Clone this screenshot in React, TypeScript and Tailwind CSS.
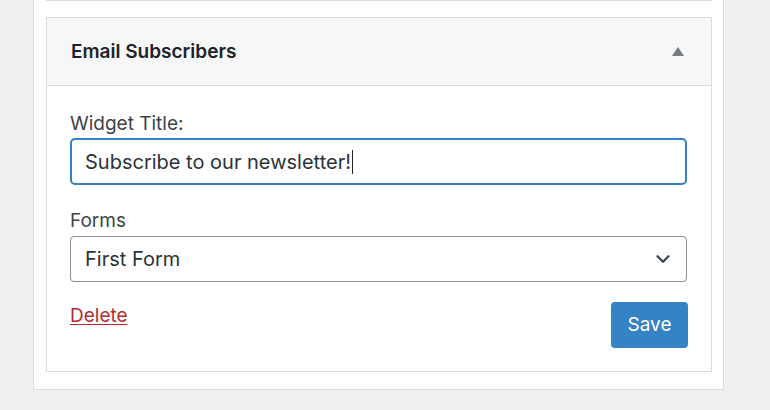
import { ChevronDown } from "lucide-react"

function WidgetHeader() {
    return (
        <div className="flex h-[68px] items-center justify-between border-b border-[#dcdcde] bg-[#f6f7f7] pl-[24px] pr-[27px]">
            <h3 className="pt-px text-[19px] font-semibold text-[#1d2327]">Email Subscribers</h3>
            <span className="h-0 w-0 border-x-[6px] border-b-[9px] border-x-transparent border-b-[#787c82]" />
        </div>
    )
}

export default function App() {
    return (
        <div className="h-[410px] w-[770px] overflow-hidden bg-[#f0f0f1] pl-[33px] font-['Inter',sans-serif]">
            <div className="h-[390px] w-[691px] border-x border-b border-[#dcdcde] bg-white px-[12px]">
                <div className="h-px w-[666px] bg-[#dcdcde]" />
                <div className="mt-[16px] w-[666px] border border-[#dcdcde]">
                    <WidgetHeader />
                    <div className="px-[23px] pb-[23px] pt-[26px]">
                        <label className="block text-[19px] leading-[24px] text-[#3c434a]">Widget Title:</label>
                        <div className="mt-[2px] flex h-[47px] w-[617px] items-center rounded-[5px] border-2 border-[#3582c4] px-[13px] text-[20px] text-[#2c3338]">
                            Subscribe to our newsletter!
                            <span className="ml-px h-[24px] w-px bg-[#1d2327]" />
                        </div>
                        <label className="mt-[24px] block text-[19px] leading-[24px] text-[#3c434a]">Forms</label>
                        <div className="mt-[3px] flex h-[46px] w-[617px] items-center justify-between rounded-[4px] border border-[#8c8f94] pl-[14px] pr-[12px] text-[20px] text-[#2c3338]">
                            <span>First Form</span>
                            <ChevronDown size={22} strokeWidth={2.5} className="text-[#3c434a]" />
                        </div>
                        <div className="mt-[20px] flex items-start justify-between">
                            <a href="#" className="mt-[2px] text-[19px] leading-[24px] text-[#b32d2e] underline underline-offset-2">Delete</a>
                            <button className="h-[46px] w-[77px] rounded-[4px] bg-[#3582c4] text-[19px] text-white">Save</button>
                        </div>
                    </div>
                </div>
            </div>
        </div>
    )
}
